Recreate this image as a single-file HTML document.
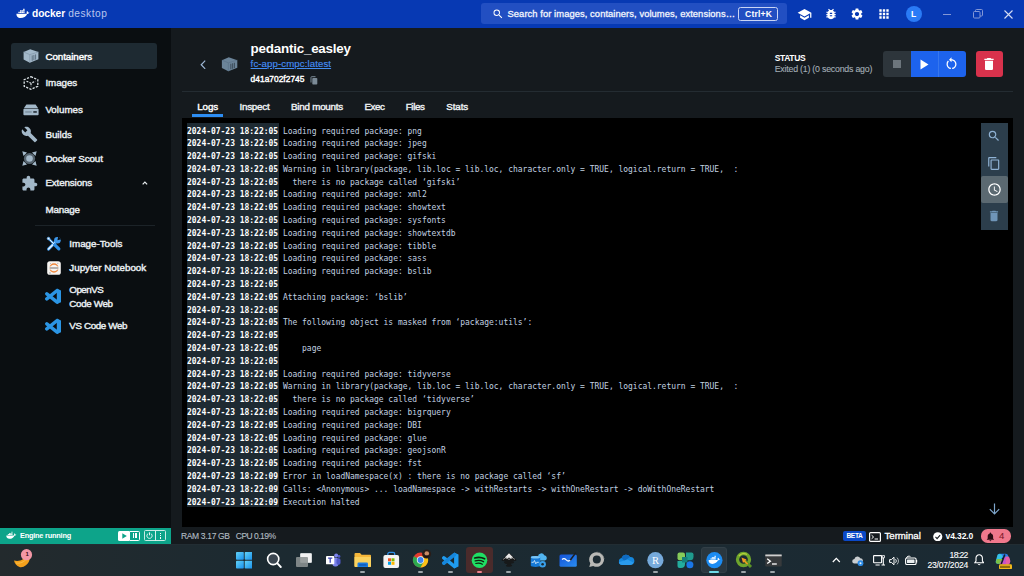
<!DOCTYPE html>
<html lang="en">
<head>
<meta charset="utf-8">
<title>Docker Desktop</title>
<style>
*{box-sizing:border-box;margin:0;padding:0}
html,body{width:1024px;height:576px;overflow:hidden;background:#151a1e;font-family:"Liberation Sans",Arial,sans-serif;color:#fff}
.abs{position:absolute}
.tx{position:absolute;white-space:nowrap}
#top{position:absolute;left:0;top:0;width:1024px;height:28px;background:#0739b3}
#side{position:absolute;left:0;top:28px;width:171px;height:500px;background:#0a0e11}
#main{position:absolute;left:171px;top:28px;width:853px;height:500px;background:#151a1e}
#search{position:absolute;left:481px;top:3px;width:306px;height:21px;border-radius:3px;background:#224fc2}
#search .k{position:absolute;left:257px;top:4px;width:40px;height:14px;border:1px solid #c9d5f5;border-radius:2.5px;font-size:8.6px;font-weight:700;line-height:12px;text-align:center;color:#fff}
#pill{position:absolute;left:11px;top:43px;width:146px;height:26px;border-radius:3px;background:#1e2a32}
.hr{position:absolute;left:182px;top:91px;width:831px;height:1px;background:#242c32}
#ul{position:absolute;left:192px;top:114px;width:31px;height:3px;background:#2d8df2}
#log{position:absolute;left:182px;top:118px;width:831px;height:409px;background:#000;overflow:hidden}
#tsbg{position:absolute;left:5px;top:5px;width:91.6px;height:384px;background:#1e2a32}
#log .in{position:absolute;left:5px;top:6.5px;font-family:"DejaVu Sans Mono","Liberation Mono",monospace;font-size:9.2px;line-height:12.8px;color:#c2d2e0;white-space:pre;transform:scaleX(0.8667);transform-origin:0 0}
.ln{height:12.8px}
.ln b{color:#fff;font-weight:700}
.btn{position:absolute;top:51px;height:26px}
#foot-l{position:absolute;left:0;top:528px;width:171px;height:16px;background:#0da48a}
#foot-r{position:absolute;left:171px;top:528px;width:853px;height:16px;background:#151a1e}
#task{position:absolute;left:0;top:544px;width:1024px;height:32px;background:linear-gradient(90deg,#232a2d 0%,#1c2a31 25%,#1b2a33 100%)}
</style>
</head>
<body>
<!-- ============ TOP BAR ============ -->
<div id="top">
  <svg class="abs" style="left:15.800px;top:8.300px" width="14.500" height="11.600" viewBox="0 0 30 24"><path fill="#fff" d="M29.2 10.1c-.7-.5-2.300-.7-3.500-.4-.2-1.200-.9-2.300-2-3.100l-.6-.4-.4.600c-.8 1.200-1 3.100-.2 4.400-.4.200-1.100.5-2.100.5H1c-.4 2 .1 4.700 1.700 6.500 1.500 1.800 3.800 2.700 6.800 2.700 6.500 0 11.300-3 13.600-8.400.9 0 2.800 0 3.800-1.900l.3-.7-.6-.4zM5 8h2.800v2.600H5zm3.300 0h2.800v2.600H8.300zm3.300 0h2.800v2.600h-2.800zm3.300 0h2.800v2.600h-2.800zM8.300 4.900h2.800v2.600H8.300zm3.300 0h2.800v2.600h-2.800zm3.300 0h2.800v2.600h-2.800zm0-3.100h2.800v2.600h-2.800z"/></svg>
  <div id="search">
    <svg class="abs" style="left:11px;top:5px" width="12" height="12" viewBox="0 0 24 24"><path fill="#fff" d="M15.500 14h-.79l-.28-.27A6.470 6.470 0 0 0 16 9.500 6.500 6.500 0 1 0 9.500 16c1.610 0 3.090-.59 4.230-1.570l.27.28v.79l5 4.990L20.490 19l-4.990-5zm-6 0C7.010 14 5 11.990 5 9.500S7.010 5 9.500 5 14 7.010 14 9.500 11.990 14 9.500 14z"/></svg>
    <div class="k"></div>
  </div>
  <!-- learning -->
  <svg class="abs" style="left:797px;top:7px" width="15" height="15" viewBox="0 0 24 24"><path fill="#fff" d="M5 13.180v4L12 21l7-3.820v-4L12 17l-7-3.820zM12 3 1 9l11 6 9-4.910V17h2V9L12 3z"/></svg>
  <!-- bug -->
  <svg class="abs" style="left:824px;top:7px" width="14" height="14" viewBox="0 0 24 24"><path fill="#fff" d="M20 8h-2.810a5.985 5.985 0 0 0-1.820-1.960L17 4.410 15.590 3l-2.170 2.170C12.960 5.060 12.490 5 12 5c-.49 0-.96.060-1.410.170L8.410 3 7 4.410l1.620 1.630C7.880 6.550 7.260 7.220 6.810 8H4v2h2.090c-.050.330-.090.660-.090 1v1H4v2h2v1c0 .340.040.670.090 1H4v2h2.810c1.040 1.790 2.970 3 5.190 3s4.150-1.210 5.190-3H20v-2h-2.090c.050-.330.090-.660.090-1v-1h2v-2h-2v-1c0-.340-.040-.670-.090-1H20V8zm-6 8h-4v-2h4v2zm0-4h-4v-2h4v2z"/></svg>
  <!-- gear -->
  <svg class="abs" style="left:850px;top:7px" width="14" height="14" viewBox="0 0 24 24"><path fill="#fff" d="M19.140 12.940c.040-.300.060-.610.060-.940 0-.320-.020-.640-.070-.940l2.030-1.580a.490.490 0 0 0 .12-.61l-1.920-3.320a.488.488 0 0 0-.59-.22l-2.390.96c-.5-.38-1.030-.7-1.620-.94l-.36-2.540a.484.484 0 0 0-.48-.41h-3.840c-.24 0-.43.170-.47.410l-.36 2.540c-.59.240-1.130.57-1.620.94l-2.390-.96c-.22-.08-.47 0-.59.220L2.740 8.870c-.12.210-.08.470.12.610l2.030 1.580c-.05.300-.09.630-.09.940s.02.640.07.940l-2.030 1.580a.49.490 0 0 0-.12.610l1.920 3.320c.12.220.37.290.59.220l2.390-.96c.5.380 1.030.7 1.620.94l.36 2.540c.05.240.24.410.48.410h3.840c.24 0 .44-.17.470-.41l.36-2.540c.59-.24 1.130-.56 1.620-.94l2.390.96c.22.08.47 0 .59-.22l1.920-3.320c.12-.22.070-.47-.12-.61l-2.010-1.580zM12 15.600c-1.980 0-3.600-1.620-3.600-3.600s1.620-3.600 3.600-3.600 3.600 1.620 3.600 3.600-1.620 3.600-3.600 3.600z"/></svg>
  <!-- grid -->
  <svg class="abs" style="left:877px;top:7px" width="14" height="14" viewBox="0 0 24 24"><path fill="#fff" d="M4 8h4V4H4v4zm6 12h4v-4h-4v4zm-6 0h4v-4H4v4zm0-6h4v-4H4v4zm6 0h4v-4h-4v4zm6-10v4h4V4h-4zm-6 4h4V4h-4v4zm6 6h4v-4h-4v4zm0 6h4v-4h-4v4z"/></svg>
  <!-- avatar -->
  <div class="abs" style="left:905.500px;top:6px;width:16px;height:16px;border-radius:8px;background:#2a7bf6;font-size:8.500px;font-weight:700;line-height:16px;text-align:center;color:#fff">L</div>
  <!-- window controls -->
  <div class="abs" style="left:943px;top:13.500px;width:8px;height:1px;background:#8397d6"></div>
  <svg class="abs" style="left:973px;top:9px" width="10" height="10" viewBox="0 0 10 10"><rect x="0.5" y="2.500" width="6.500" height="6.500" rx="1" fill="none" stroke="#8397d6" stroke-width="1"/><path d="M2.500 2.500V1.500a1 1 0 0 1 1-1H8.500a1 1 0 0 1 1 1V6a1 1 0 0 1-1 1H7" fill="none" stroke="#8397d6" stroke-width="1"/></svg>
  <svg class="abs" style="left:1004px;top:9.500px" width="9" height="9" viewBox="0 0 9 9"><path d="M0.500 0.500l8 8M8.500 0.500l-8 8" stroke="#d5dcf3" stroke-width="1.100" fill="none"/></svg>
</div>

<!-- ============ SIDEBAR ============ -->
<div id="side"></div>
<div id="pill"></div>
<!-- containers -->
<svg class="abs" style="left:23px;top:49px" width="16" height="14" viewBox="0 0 16 14"><path d="M7.200 0.300L0.600 3v7.600l6.200 3.100 8.600-3.500V3z" fill="#a3b8c9"/><path d="M0.600 3l6.200 2.600 8.600-2.600M6.800 5.600v8.100" stroke="#8397a7" stroke-width="0.700" fill="none"/><path d="M9.200 6.400v5.400M10.900 5.900v5.300M12.600 5.400v5.200" stroke="#5f7282" stroke-width="1"/></svg>
<!-- images -->
<svg class="abs" style="left:23px;top:76px" width="16" height="14" viewBox="0 0 16 14"><path d="M8 0.700L14.800 3.700v6.600L8 13.300 1.200 10.300V3.700z" fill="none" stroke="#dfe6ea" stroke-width="1.300" stroke-dasharray="2.200 1.300"/><path d="M3.500 5.200L8 7.200l4.500-2M8 7.200v3.600" fill="none" stroke="#dfe6ea" stroke-width="1.200" stroke-dasharray="2 1.200"/></svg>
<!-- volumes -->
<svg class="abs" style="left:23px;top:104px" width="16" height="12" viewBox="0 0 16 12"><path d="M3.400 0.500h9.200l2.600 3.800H0.800z" fill="#a3b8c9"/><rect x="0.400" y="4.700" width="15.200" height="6.600" rx="1" fill="#a3b8c9"/><rect x="2.200" y="7.300" width="6.500" height="1.300" fill="#788b9a"/><rect x="10.300" y="7.100" width="3.500" height="1.700" fill="#2a343c"/></svg>
<!-- builds (wrench) -->
<svg class="abs" style="left:21px;top:126px" width="17" height="17" viewBox="0 0 24 24"><path fill="#a3b8c9" d="M22.700 19l-9.100-9.100c.9-2.300.4-5-1.500-6.900-2-2-5-2.400-7.400-1.300L9 6 6 9 1.600 4.700C.4 7.100.9 10.100 2.900 12.100c1.900 1.900 4.600 2.400 6.900 1.500l9.100 9.100c.4.400 1 .4 1.400 0l2.300-2.300c.5-.4.500-1.100.1-1.400z"/></svg>
<!-- scout -->
<svg class="abs" style="left:22px;top:151px" width="15" height="15" viewBox="0 0 15 15"><path d="M0.300 0.300l4.700 1.200L1.500 5zM14.700 0.300L13.500 5 10 1.500zM0.300 14.700L1.500 10 5 13.500zM14.700 14.700L10 13.500 13.500 10z" fill="#a3b8c9"/><circle cx="7.500" cy="7.500" r="5.600" fill="#55636e"/><circle cx="7.500" cy="7.500" r="3.300" fill="#a3b8c9"/></svg>
<!-- extensions (puzzle) -->
<svg class="abs" style="left:21px;top:174.500px" width="17" height="17" viewBox="0 0 24 24"><path fill="#a3b8c9" d="M20.500 11H19V7c0-1.100-.9-2-2-2h-4V3.500C13 2.120 11.880 1 10.500 1S8 2.120 8 3.500V5H4c-1.100 0-1.990.9-1.990 2v3.800H3.500c1.490 0 2.700 1.210 2.700 2.700s-1.210 2.700-2.700 2.700H2V20c0 1.100.9 2 2 2h3.800v-1.500c0-1.490 1.210-2.700 2.700-2.700 1.490 0 2.700 1.210 2.700 2.700V22H17c1.100 0 2-.9 2-2v-4h1.500c1.380 0 2.500-1.120 2.500-2.500S21.880 11 20.500 11z"/></svg>
<!-- image-tools -->
<svg class="abs" style="left:46px;top:236px" width="15.500" height="15.500" viewBox="0 0 15.500 15.500"><path d="M2.600 13L10.500 5" stroke="#4a9fec" stroke-width="3.200" stroke-linecap="round" fill="none"/><path d="M2.600 13L9.500 6" stroke="#eef5fc" stroke-width="1.400" stroke-linecap="round" fill="none"/><circle cx="11.400" cy="4.200" r="3.300" fill="#3d97ea"/><path d="M11.400 4.200L12.300 0.300 15.300 3.200z" fill="#0a0e11"/><path d="M3 3L8.500 8.500" stroke="#4a9fec" stroke-width="2.400" stroke-linecap="round" fill="none"/><path d="M3 3L8 8" stroke="#eef5fc" stroke-width="1" stroke-linecap="round" fill="none"/><path d="M8.800 8.800L12.800 12.800" stroke="#2f8fe6" stroke-width="3.300" stroke-linecap="round" fill="none"/><circle cx="2.500" cy="2.500" r="1.300" fill="#eef5fc" stroke="#4a9fec" stroke-width="0.700"/></svg>
<!-- jupyter -->
<svg class="abs" style="left:46.500px;top:260.500px" width="14" height="14" viewBox="0 0 14 14"><rect x="0.200" y="0.200" width="13.600" height="13.600" rx="2.600" fill="#f6f4f1"/><circle cx="7" cy="7" r="4" fill="none" stroke="#f0893f" stroke-width="1.400"/><rect x="1.800" y="5.400" width="10.400" height="3.200" fill="#f6f4f1"/><rect x="2.600" y="6.400" width="8.800" height="1.200" fill="#8a8584"/><circle cx="3" cy="11.900" r="0.600" fill="#767677"/><circle cx="10.800" cy="2.200" r="0.550" fill="#989798"/><circle cx="3.400" cy="2.400" r="0.450" fill="#767677"/></svg>
<!-- openvs code -->
<svg class="abs" style="left:44.800px;top:288.200px" width="16.600" height="16.600" viewBox="0 0 100 100"><path d="M71 3L97 15V85L71 97z" fill="#2b95e4"/><path d="M73 15L11 65M11 35L73 85" stroke="#2b95e4" stroke-width="21" stroke-linecap="round" fill="none"/></svg>
<!-- vs code web -->
<svg class="abs" style="left:44.800px;top:317.800px" width="16.600" height="16.600" viewBox="0 0 100 100"><path d="M71 3L97 15V85L71 97z" fill="#2b95e4"/><path d="M73 15L11 65M11 35L73 85" stroke="#2b95e4" stroke-width="21" stroke-linecap="round" fill="none"/></svg>

<svg class="abs" style="left:142px;top:180.800px" width="5.800" height="4.200" viewBox="0 0 7 5"><path d="M0.800 4l2.700-2.700L6.200 4" stroke="#e8edf0" stroke-width="1.500" fill="none"/></svg>
<div class="abs" style="left:35px;top:225px;width:119.500px;height:1px;background:#1c2328"></div>

<!-- ============ MAIN ============ -->
<div id="main"></div>
<svg class="abs" style="left:199.500px;top:59.500px" width="6.400" height="9.500" viewBox="0 0 7 11"><path d="M5.800 0.800L1.200 5.500l4.600 4.700" stroke="#9fb8d6" stroke-width="1.400" fill="none"/></svg>
<svg class="abs" style="left:220.800px;top:57px" width="17.200" height="14.600" viewBox="0 0 16 14"><path d="M7.200 0.300L0.600 3v7.600l6.200 3.100 8.600-3.500V3z" fill="#6b8499"/><path d="M0.600 3l6.200 2.600 8.600-2.600M6.800 5.600v8.100" stroke="#5a7186" stroke-width="0.600" fill="none"/><path d="M9.200 6.400v5.400M10.900 5.900v5.300M12.600 5.400v5.200" stroke="#3e4f5d" stroke-width="1"/></svg>

<svg class="abs" style="left:310px;top:75.500px" width="8" height="9" viewBox="0 0 8 9"><rect x="2.300" y="2" width="5" height="6.500" rx="0.800" fill="#7b8a96"/><path d="M1 6.500V1.300a.6.600 0 0 1 .6-.6H5.500" stroke="#7b8a96" stroke-width="1" fill="none"/></svg>

<div class="btn" style="left:883px;width:28px;background:#2d353b;border-radius:3px 0 0 3px"></div>
<div class="abs" style="left:892.500px;top:60px;width:8px;height:8px;background:#6c757c"></div>
<div class="btn" style="left:910.500px;width:27.500px;background:#1d63ed"></div>
<svg class="abs" style="left:920px;top:58.500px" width="9" height="11" viewBox="0 0 9 11"><path d="M0.500 0.500v10l8-5z" fill="#fff"/></svg>
<div class="btn" style="left:938px;width:27.500px;background:#1d63ed;border-radius:0 3px 3px 0;border-left:1px solid #3677ee"></div>
<svg class="abs" style="left:944.200px;top:55.800px" width="15" height="15" viewBox="0 0 24 24"><path fill="#fff" d="M12 5V2L8 6l4 4V7c3.310 0 6 2.690 6 6 0 2.970-2.170 5.430-5 5.910v2.020c3.950-.49 7-3.850 7-7.930 0-4.420-3.580-8-8-8zm-6 8c0-1.650.67-3.150 1.760-4.240L6.340 7.340A8.014 8.014 0 0 0 4 13c0 4.080 3.050 7.440 7 7.930v-2.020c-2.830-.48-5-2.940-5-5.910z"/></svg>
<div class="btn" style="left:976px;width:27px;background:#d8324c;border-radius:3px"></div>
<svg class="abs" style="left:981.200px;top:55.800px" width="16" height="16" viewBox="0 0 24 24"><path fill="#fff" d="M6 19c0 1.100.9 2 2 2h8c1.100 0 2-.9 2-2V7H6v12zM19 4h-3.500l-1-1h-5l-1 1H5v2h14V4z"/></svg>

<div class="hr"></div>
<div id="ul"></div>

<div id="log"><div id="tsbg"></div><div class="in"><div class="ln"><b>2024-07-23 18:22:05</b> Loading required package: png</div><div class="ln"><b>2024-07-23 18:22:05</b> Loading required package: jpeg</div><div class="ln"><b>2024-07-23 18:22:05</b> Loading required package: gifski</div><div class="ln"><b>2024-07-23 18:22:05</b> Warning in library(package, lib.loc = lib.loc, character.only = TRUE, logical.return = TRUE,  :</div><div class="ln"><b>2024-07-23 18:22:05</b>   there is no package called ‘gifski’</div><div class="ln"><b>2024-07-23 18:22:05</b> Loading required package: xml2</div><div class="ln"><b>2024-07-23 18:22:05</b> Loading required package: showtext</div><div class="ln"><b>2024-07-23 18:22:05</b> Loading required package: sysfonts</div><div class="ln"><b>2024-07-23 18:22:05</b> Loading required package: showtextdb</div><div class="ln"><b>2024-07-23 18:22:05</b> Loading required package: tibble</div><div class="ln"><b>2024-07-23 18:22:05</b> Loading required package: sass</div><div class="ln"><b>2024-07-23 18:22:05</b> Loading required package: bslib</div><div class="ln"><b>2024-07-23 18:22:05</b> </div><div class="ln"><b>2024-07-23 18:22:05</b> Attaching package: ‘bslib’</div><div class="ln"><b>2024-07-23 18:22:05</b> </div><div class="ln"><b>2024-07-23 18:22:05</b> The following object is masked from ‘package:utils’:</div><div class="ln"><b>2024-07-23 18:22:05</b> </div><div class="ln"><b>2024-07-23 18:22:05</b>     page</div><div class="ln"><b>2024-07-23 18:22:05</b> </div><div class="ln"><b>2024-07-23 18:22:05</b> Loading required package: tidyverse</div><div class="ln"><b>2024-07-23 18:22:05</b> Warning in library(package, lib.loc = lib.loc, character.only = TRUE, logical.return = TRUE,  :</div><div class="ln"><b>2024-07-23 18:22:05</b>   there is no package called ‘tidyverse’</div><div class="ln"><b>2024-07-23 18:22:05</b> Loading required package: bigrquery</div><div class="ln"><b>2024-07-23 18:22:05</b> Loading required package: DBI</div><div class="ln"><b>2024-07-23 18:22:05</b> Loading required package: glue</div><div class="ln"><b>2024-07-23 18:22:05</b> Loading required package: geojsonR</div><div class="ln"><b>2024-07-23 18:22:05</b> Loading required package: fst</div><div class="ln"><b>2024-07-23 18:22:09</b> Error in loadNamespace(x) : there is no package called ‘sf’</div><div class="ln"><b>2024-07-23 18:22:09</b> Calls: &lt;Anonymous&gt; ... loadNamespace -&gt; withRestarts -&gt; withOneRestart -&gt; doWithOneRestart</div><div class="ln"><b>2024-07-23 18:22:09</b> Execution halted</div></div>
<div class="abs" style="left:799px;top:5px;width:26.500px;height:106.500px;background:#2c3e4c"></div>
<div class="abs" style="left:799px;top:58.300px;width:26.500px;height:26.700px;background:#5b6971;border-radius:2px"></div>
<svg class="abs" style="left:805px;top:11px" width="14" height="14" viewBox="0 0 24 24"><path fill="#8fb2d4" d="M15.500 14h-.79l-.28-.27A6.470 6.470 0 0 0 16 9.500 6.500 6.500 0 1 0 9.500 16c1.610 0 3.090-.59 4.230-1.570l.27.28v.79l5 4.990L20.490 19l-4.990-5zm-6 0C7.010 14 5 11.990 5 9.500S7.010 5 9.500 5 14 7.010 14 9.500 11.990 14 9.500 14z"/></svg>
<svg class="abs" style="left:805px;top:37.500px" width="14" height="15" viewBox="0 0 24 24"><path fill="#8fb2d4" d="M16 1H4c-1.100 0-2 .9-2 2v14h2V3h12V1zm3 4H8c-1.100 0-2 .9-2 2v14c0 1.100.9 2 2 2h11c1.100 0 2-.9 2-2V7c0-1.100-.9-2-2-2zm0 16H8V7h11v14z"/></svg>
<svg class="abs" style="left:804.500px;top:64px" width="15" height="15" viewBox="0 0 24 24"><path fill="#fff" d="M11.990 2C6.470 2 2 6.480 2 12s4.470 10 9.990 10C17.520 22 22 17.520 22 12S17.520 2 11.990 2zM12 20c-4.420 0-8-3.580-8-8s3.580-8 8-8 8 3.580 8 8-3.580 8-8 8zm.5-13H11v6l5.250 3.150.75-1.230-4.500-2.670z"/></svg>
<svg class="abs" style="left:805px;top:91px" width="14" height="14" viewBox="0 0 24 24"><path fill="#6f95b8" d="M6 19c0 1.100.9 2 2 2h8c1.100 0 2-.9 2-2V7H6v12zM19 4h-3.500l-1-1h-5l-1 1H5v2h14V4z"/></svg>
<svg class="abs" style="left:806.500px;top:385px" width="11" height="12" viewBox="0 0 11 12"><path d="M5.500 0.500v10.200M0.800 6.200l4.700 4.700 4.700-4.700" stroke="#7ea6cc" stroke-width="1.200" fill="none"/></svg>

</div>

<!-- ============ FOOTER ============ -->
<div id="foot-l"></div>
<div id="foot-r"></div>
<!-- whale in footer -->
<svg class="abs" style="left:5.500px;top:531px" width="11" height="9" viewBox="0 0 30 24"><path fill="#fff" d="M29.200 10.100c-.7-.5-2.300-.7-3.500-.4-.2-1.200-.9-2.300-2-3.100l-.6-.4-.4.600c-.8 1.200-1 3.100-.2 4.400-.4.200-1.100.5-2.100.5H1c-.4 2 .1 4.700 1.700 6.500 1.500 1.800 3.800 2.700 6.800 2.700 6.500 0 11.300-3 13.600-8.400.9 0 2.800 0 3.800-1.900l.3-.7-.6-.4zM5 8h2.800v2.600H5zm3.300 0h2.800v2.600H8.300zm3.300 0h2.800v2.600h-2.800zm3.300 0h2.800v2.600h-2.800zM8.300 4.900h2.800v2.600H8.300zm3.300 0h2.800v2.600h-2.800zm3.300 0h2.800v2.600h-2.800zm0-3.100h2.800v2.600h-2.800z"/></svg>
<!-- play/pause -->
<div class="abs" style="left:118.200px;top:530.500px;width:11px;height:10.500px;background:#fff;border-radius:1.500px 0 0 1.500px"></div>
<svg class="abs" style="left:121.500px;top:533px" width="5" height="6" viewBox="0 0 5 6"><path d="M0.300 0.200v5.600L4.800 3z" fill="#0da48a"/></svg>
<div class="abs" style="left:129.200px;top:530.500px;width:11px;height:10.500px;border:1px solid #fff;border-radius:0 1.500px 1.500px 0"></div>
<div class="abs" style="left:132.700px;top:533.300px;width:1.500px;height:5px;background:#fff"></div>
<div class="abs" style="left:135.400px;top:533.300px;width:1.500px;height:5px;background:#fff"></div>
<!-- power/kebab -->
<div class="abs" style="left:144.200px;top:530.300px;width:22px;height:11px;border:1px solid #c9ece5;border-radius:1.500px"></div>
<div class="abs" style="left:155px;top:530.500px;width:1px;height:10.500px;background:#d9f1ec"></div>
<svg class="abs" style="left:146.300px;top:532.300px" width="7" height="7" viewBox="0 0 7 7"><path d="M2.200 1.500a2.600 2.600 0 1 0 2.600 0" stroke="#fff" stroke-width="0.900" fill="none"/><path d="M3.500 0.300v3" stroke="#fff" stroke-width="0.900"/></svg>
<div class="abs" style="left:160.200px;top:533px;width:1.200px;height:1.200px;background:#fff"></div>
<div class="abs" style="left:160.200px;top:535.200px;width:1.200px;height:1.200px;background:#fff"></div>
<div class="abs" style="left:160.200px;top:537.400px;width:1.200px;height:1.200px;background:#fff"></div>
<!-- right footer -->
<div class="abs" style="left:843.300px;top:531px;width:22.500px;height:10px;background:#0b49c8;border-radius:2px"></div>
<svg class="abs" style="left:869px;top:531.500px" width="12" height="10" viewBox="0 0 12 10"><rect x="0.600" y="0.600" width="10.800" height="8.800" rx="1" fill="none" stroke="#fff" stroke-width="1.200"/><path d="M2.600 3.200l2 1.800-2 1.800M5.600 7h3.400" stroke="#fff" stroke-width="1" fill="none"/></svg>
<svg class="abs" style="left:933px;top:531.500px" width="9.500" height="9.500" viewBox="0 0 10 10"><circle cx="5" cy="5" r="4.800" fill="#fff"/><path d="M2.600 5.200l1.700 1.700 3.200-3.500" stroke="#151a1e" stroke-width="1.200" fill="none"/></svg>
<div class="abs" style="left:981.300px;top:529.400px;width:29.600px;height:13.200px;border-radius:6.600px;background:#f0788c"></div>
<svg class="abs" style="left:985.200px;top:530.600px" width="10.800" height="11.400" viewBox="0 0 24 24"><path fill="#2b0d13" d="M12 22c1.100 0 2-.9 2-2h-4c0 1.100.89 2 2 2zm6-6v-5c0-3.070-1.640-5.640-4.500-6.320V4c0-.83-.67-1.500-1.500-1.500s-1.500.67-1.500 1.500v.68C7.630 5.360 6 7.920 6 11v5l-2 2v1h16v-1l-2-2z"/></svg>


<!-- ============ TASKBAR ============ -->
<div id="task"></div>
<div class="abs" style="left:0;top:544px;width:1024px;height:1px;background:#222d33"></div>
<!-- widget: crescent + badge -->
<svg class="abs" style="left:12px;top:547.800px" width="22" height="23" viewBox="0 0 22 23"><path d="M2 12.500c5 1.500 11-.5 13.500-7.500 1.800 1 3 4 1.800 7.500-1.500 4.500-6 7.500-9.800 6.500-2.800-.7-4.800-3.500-5.500-6.500z" fill="#f5a11c"/><path d="M4 15c3.500.8 8.500-.8 11-5" stroke="#f9c04a" stroke-width="1" fill="none"/><circle cx="14.500" cy="6.700" r="5.600" fill="#f397a6"/></svg>
<!-- windows -->
<svg class="abs" style="left:235.700px;top:552px" width="16.500" height="16.500" viewBox="0 0 16.500 16.500"><defs><linearGradient id="wg" x1="0" y1="0" x2="1" y2="1"><stop offset="0" stop-color="#63d2f5"/><stop offset="1" stop-color="#1890ee"/></linearGradient></defs><rect x="0" y="0" width="7.800" height="7.800" rx="0.800" fill="url(#wg)"/><rect x="8.700" y="0" width="7.800" height="7.800" rx="0.800" fill="url(#wg)"/><rect x="0" y="8.700" width="7.800" height="7.800" rx="0.800" fill="url(#wg)"/><rect x="8.700" y="8.700" width="7.800" height="7.800" rx="0.800" fill="url(#wg)"/></svg>
<!-- search -->
<svg class="abs" style="left:265px;top:551px" width="18" height="18" viewBox="0 0 18 18"><circle cx="8.200" cy="8" r="5.600" fill="#3b4650" stroke="#fff" stroke-width="1.600"/><path d="M12.400 12.300l3.400 3.700" stroke="#fff" stroke-width="1.900" stroke-linecap="round"/></svg>
<!-- task view -->
<div class="abs" style="left:299.500px;top:552.500px;width:12px;height:10.300px;background:#f2f2f2;border-radius:1px;border:1px solid #cfd4d6"></div>
<div class="abs" style="left:295.500px;top:556.500px;width:12px;height:10.300px;background:rgba(140,146,146,0.880);border-radius:1px"></div>
<!-- teams -->
<svg class="abs" style="left:325px;top:552px" width="16" height="16" viewBox="0 0 16 16"><circle cx="11.200" cy="3.400" r="2" fill="#7b83eb"/><circle cx="14" cy="4.400" r="1.400" fill="#5059c9"/><rect x="7.500" y="5.800" width="6" height="8.600" rx="2.600" fill="#7b83eb"/><rect x="11.500" y="6.200" width="4" height="6.600" rx="1.800" fill="#5059c9"/><rect x="1" y="4" width="8.300" height="8.300" rx="0.900" fill="#fff"/><path d="M3.100 6.100h4.200M5.200 6.100v4.700" stroke="#3b44b4" stroke-width="1.300"/></svg>
<!-- explorer -->
<svg class="abs" style="left:353.500px;top:552px" width="17.500" height="16" viewBox="0 0 17.500 16"><path d="M0.500 2a1 1 0 0 1 1-1h4.500l1.600 1.800H16a1 1 0 0 1 1 1V14a1 1 0 0 1-1 1H1.500a1 1 0 0 1-1-1z" fill="#f5b73a"/><path d="M0.500 5h16.500v9a1 1 0 0 1-1 1H1.500a1 1 0 0 1-1-1z" fill="#fad25f"/><path d="M3.500 15v-3.200a1.200 1.200 0 0 1 1.200-1.200h8.100a1.200 1.200 0 0 1 1.200 1.200V15z" fill="#1b7ae0"/><rect x="5" y="12.300" width="7.500" height="1.300" fill="#0f56b3"/></svg>
<div class="abs" style="left:359.600px;top:571px;width:5px;height:2px;border-radius:1px;background:#9ba4a9"></div>
<!-- store -->
<svg class="abs" style="left:383px;top:551px" width="16.500" height="17.500" viewBox="0 0 16.500 17.500"><path d="M4.800 4.500V3a1.600 1.600 0 0 1 1.600-1.600h3.700A1.600 1.600 0 0 1 11.700 3v1.500" fill="none" stroke="#2f8fe6" stroke-width="1.300"/><rect x="0.400" y="3.900" width="15.700" height="13.200" rx="2" fill="#f4f4f4"/><rect x="5" y="7.300" width="3" height="3" fill="#f25022"/><rect x="8.500" y="7.300" width="3" height="3" fill="#7fba00"/><rect x="5" y="10.800" width="3" height="3" fill="#00a4ef"/><rect x="8.500" y="10.800" width="3" height="3" fill="#ffb900"/></svg>
<!-- chrome -->
<svg class="abs" style="left:412px;top:548px" width="21" height="21" viewBox="0 0 21 21"><circle cx="8.500" cy="12" r="7.600" fill="#e33b2e"/><path d="M8.500 12L1.900 8.200A7.600 7.600 0 0 0 8.500 19.600L12.300 13z" fill="#2da94f"/><path d="M8.500 12l3.800 1L8.500 19.600A7.600 7.600 0 0 0 15.100 8.200H8.500z" fill="#fbc116"/><circle cx="8.500" cy="12" r="3.700" fill="#f1f1f1"/><circle cx="8.500" cy="12" r="2.900" fill="#3c82f0"/><circle cx="14.600" cy="6" r="4.500" fill="#2a1d18"/><circle cx="14.800" cy="5.500" r="2.300" fill="#c98a64"/><path d="M12.200 7.500a2.600 2.600 0 0 0 5 0z" fill="#171210"/></svg>
<div class="abs" style="left:418px;top:571px;width:5px;height:2px;border-radius:1px;background:#9ba4a9"></div>
<!-- vscode -->
<svg class="abs" style="left:441.500px;top:551.500px" width="17" height="17" viewBox="0 0 100 100"><path d="M71 3L97 15V85L71 97z" fill="#1f9cf0"/><path d="M73 15L11 65M11 35L73 85" stroke="#1f9cf0" stroke-width="21" stroke-linecap="round" fill="none"/><path d="M73 15L11 65" stroke="#0d72c8" stroke-width="21" stroke-linecap="round" fill="none" opacity="0.500"/></svg>
<div class="abs" style="left:447.500px;top:571px;width:5px;height:2px;border-radius:1px;background:#9ba4a9"></div>
<!-- spotify -->
<div class="abs" style="left:466px;top:546.700px;width:26.800px;height:26.300px;border-radius:3px;background:#4a2b2b"></div>
<svg class="abs" style="left:471px;top:551.500px" width="17" height="17" viewBox="0 0 17 17"><circle cx="8.500" cy="8.200" r="7.800" fill="#1fdf64"/><path d="M3.700 6c3.400-1.100 7-.8 9.900.8" stroke="#10240f" stroke-width="1.700" fill="none" stroke-linecap="round"/><path d="M4.200 8.900c2.800-.8 5.800-.6 8.300.8" stroke="#10240f" stroke-width="1.400" fill="none" stroke-linecap="round"/><path d="M4.800 11.500c2.300-.6 4.600-.4 6.600.7" stroke="#10240f" stroke-width="1.200" fill="none" stroke-linecap="round"/></svg>
<div class="abs" style="left:477px;top:571px;width:5.300px;height:2px;border-radius:1px;background:#f0818c"></div>
<!-- inkscape -->
<svg class="abs" style="left:501px;top:551.500px" width="16" height="16.500" viewBox="0 0 16 16.500"><path d="M8 0.500L15 7.600c.6.700.3 1.400-.6 1.400H1.600C.7 9 .4 8.300 1 7.600z" fill="#17191a"/><path d="M8 1.200L12.200 5.400 10 6.800 8 5.400 6 6.800 3.800 5.400z" fill="#e8e8e8"/><path d="M3 9.500c2-.6 8-.6 10 0 .5 1.200-1.200 2-3 2.200-.3.800 1.500 1 1.200 2-.4 1.300-5.800 1.600-6.300.4-.3-.9 1.400-1 1.200-2-1.800-.3-3.500-1.200-3.100-2.600z" fill="#17191a"/><path d="M2 7.500l3-2 3 2 3-2 3 2" stroke="#9a9a9a" stroke-width="0.800" fill="none"/></svg>
<div class="abs" style="left:506px;top:571px;width:5px;height:2px;border-radius:1px;background:#9ba4a9"></div>
<!-- azure data studio like -->
<svg class="abs" style="left:529.500px;top:551px" width="17.500" height="17.500" viewBox="0 0 17.500 17.500"><path d="M8 5.600a3.300 3.300 0 0 1 6.300-1.300A2.700 2.700 0 0 1 14.800 9.600H8.600A2 2 0 0 1 8 5.600z" fill="#52b5f0"/><path d="M0.800 6.200c0-1.500 9.400-1.500 9.400 0v8.600c0 1.500-9.400 1.500-9.400 0z" fill="#1679d6"/><ellipse cx="5.500" cy="6.200" rx="4.700" ry="1.300" fill="#79c6f7"/><path d="M1.500 11.300h2l1-1.800 1.300 3.300 1-1.500h2" stroke="#e5f3ff" stroke-width="0.800" fill="none"/><circle cx="12.600" cy="13.300" r="3.300" fill="#3aa0ea"/><circle cx="12.600" cy="13.300" r="1.300" fill="#1c2a32"/></svg>
<!-- whiteboard -->
<svg class="abs" style="left:558.500px;top:551.500px" width="19" height="16" viewBox="0 0 19 16"><defs><linearGradient id="wb" x1="0" y1="0" x2="1" y2="1"><stop offset="0" stop-color="#1452d8"/><stop offset="1" stop-color="#2a8df0"/></linearGradient></defs><rect x="0.500" y="2.500" width="17.300" height="12.300" rx="1.500" fill="url(#wb)"/><path d="M3 7.500c1.500-1.200 3-.8 4.200.4s2.800 1.500 4.300.2" stroke="#fff" stroke-width="1.200" fill="none"/><path d="M11.200 8.200L16.800 0.800" stroke="#1d2024" stroke-width="1.500"/></svg>
<!-- chat -->
<svg class="abs" style="left:588px;top:551px" width="17" height="17" viewBox="0 0 17 17"><path d="M8.700 1.200a7.300 7.300 0 1 1-3.500 13.700L1.300 16l1-3.700A7.300 7.300 0 0 1 8.700 1.200z" fill="#b9b9b6"/><circle cx="8.800" cy="8.400" r="4" fill="#1c2a32"/><path d="M8.700 1.200a7.300 7.300 0 0 1 7.300 7.300" stroke="#8d8d8a" stroke-width="1" fill="none" stroke-dasharray="1 1"/></svg>
<!-- onedrive -->
<svg class="abs" style="left:617.500px;top:554px" width="17" height="12" viewBox="0 0 17 12"><path d="M4.200 11A3.500 3.500 0 0 1 3.600 4.100 4.600 4.600 0 0 1 12 3a3.900 3.900 0 0 1 1.600 7.600c-.4.300-.9.400-1.400.4z" fill="#1587dd"/><path d="M3.600 4.100A4.600 4.600 0 0 1 12 3L6.500 7z" fill="#0f6ac0"/><path d="M0.800 8.300A3.500 3.500 0 0 0 4.200 11h8a3.900 3.900 0 0 0 3.600-2.300L9.500 5.500z" fill="#2a9bec"/></svg>
<!-- rstudio -->
<svg class="abs" style="left:647px;top:551.500px" width="17" height="17" viewBox="0 0 17 17"><circle cx="8.400" cy="8.200" r="8.100" fill="#76aadb"/><text x="8.500" y="12" font-family="Liberation Serif,serif" font-size="10.500" fill="#fff" text-anchor="middle">R</text></svg>
<div class="abs" style="left:652.500px;top:571px;width:5px;height:2px;border-radius:1px;background:#9ba4a9"></div>
<!-- planner -->
<svg class="abs" style="left:676.500px;top:551.500px" width="17" height="17" viewBox="0 0 17 17"><rect x="0.500" y="0.500" width="7.500" height="7.800" rx="2" fill="#86cc5a"/><path d="M9 0.500h5.500a2 2 0 0 1 2 2v2.300a3.500 3.500 0 0 1-3.500 3.500H9z" fill="#1f9b8e"/><path d="M0.500 9h7.500v3a4 4 0 0 1-4 4H2.500a2 2 0 0 1-2-2z" fill="#23ac9d"/><rect x="5" y="5" width="5.500" height="5.500" fill="#15807a"/><circle cx="12.900" cy="12.700" r="3.500" fill="#1a76e6"/></svg>
<!-- docker -->
<div class="abs" style="left:701px;top:546.700px;width:26.300px;height:26.300px;border-radius:3px;background:#2a373f;border:1px solid #323f47"></div>
<svg class="abs" style="left:705.500px;top:551.500px" width="17" height="17" viewBox="0 0 17 17"><circle cx="8.400" cy="8.200" r="8.100" fill="#1c8cf2"/><g transform="translate(2.300,3.100) scale(0.420)"><path fill="#fff" d="M29.200 10.100c-.7-.5-2.300-.7-3.500-.4-.2-1.200-.9-2.300-2-3.100l-.6-.4-.4.600c-.8 1.200-1 3.100-.2 4.400-.4.200-1.100.5-2.100.5H1c-.4 2 .1 4.700 1.700 6.500 1.500 1.800 3.800 2.700 6.800 2.700 6.500 0 11.300-3 13.600-8.400.9 0 2.800 0 3.800-1.900l.3-.7-.6-.4zM5 8h12.700v2.600H5zm3.300-3.100h9.400v2.600H8.300zm6.600-3.100h2.800v2.600h-2.800z"/></g></svg>
<div class="abs" style="left:708.900px;top:570.900px;width:10.400px;height:2.100px;border-radius:1px;background:#6fdbe9"></div>
<!-- qgis -->
<svg class="abs" style="left:734.500px;top:550.500px" width="18" height="18" viewBox="0 0 18 18"><circle cx="8.500" cy="8.500" r="6" fill="none" stroke="#6ea52c" stroke-width="3.300"/><path d="M4 5a6 6 0 0 1 8-1.500" stroke="#b5cf3b" stroke-width="1.300" fill="none"/><path d="M9.500 9.500L16 16" stroke="#5c9427" stroke-width="3"/><path d="M6.500 6.500l5 2-1.300 1.200 3 3-1 1-3-3L8 12z" fill="#f39a1f"/></svg>
<div class="abs" style="left:741px;top:571px;width:5px;height:2px;border-radius:1px;background:#9ba4a9"></div>
<!-- terminal -->
<svg class="abs" style="left:764.500px;top:553.500px" width="17" height="13" viewBox="0 0 17 13"><rect x="0.300" y="0.500" width="16.400" height="12" rx="0.800" fill="#373a3c"/><rect x="0.300" y="0.500" width="16.400" height="1.800" fill="#cfcfcf"/><path d="M2.200 4.800l3.200 2.400-3.200 2.400" stroke="#fff" stroke-width="1.300" fill="none"/><path d="M7 10h4.800" stroke="#fff" stroke-width="1.300"/></svg>
<div class="abs" style="left:770px;top:571px;width:5px;height:2px;border-radius:1px;background:#9ba4a9"></div>
<!-- tray chevron -->
<svg class="abs" style="left:832px;top:557px" width="9" height="6" viewBox="0 0 9 6"><path d="M0.800 5l3.500-3.700L7.800 5" stroke="#fff" stroke-width="1.200" fill="none"/></svg>
<!-- tray cloud -->
<svg class="abs" style="left:851.500px;top:555.500px" width="12" height="10.500" viewBox="0 0 12 10.500"><path d="M2.600 7.500A2.300 2.300 0 0 1 2.400 2.900 3.200 3.200 0 0 1 8.300 2.200 2.700 2.700 0 0 1 9 7.500z" fill="#c9cdd0"/><circle cx="8.500" cy="7.200" r="2.900" fill="#2b8be6"/><circle cx="8.500" cy="7.200" r="1" fill="#e9f3fd"/></svg>
<!-- tray monitor -->
<svg class="abs" style="left:872.500px;top:554.500px" width="12.500" height="11" viewBox="0 0 12.500 11"><rect x="0.600" y="0.600" width="8" height="7.200" rx="0.500" fill="none" stroke="#fff" stroke-width="1.100"/><path d="M2.500 10h4.200M10.300 2.500v7.500M8.500 10h3.500" stroke="#fff" stroke-width="1.100"/><rect x="9.200" y="0.300" width="2.200" height="2.800" rx="0.400" fill="none" stroke="#fff" stroke-width="0.900"/></svg>
<!-- tray sound -->
<svg class="abs" style="left:889px;top:555.500px" width="11" height="10" viewBox="0 0 11 10"><path d="M0.600 3.600h1.800L5 1.200v7.600L2.400 6.400H0.600z" fill="none" stroke="#fff" stroke-width="1"/><path d="M6.500 3.200a2.500 2.500 0 0 1 0 3.600" stroke="#fff" stroke-width="0.900" fill="none"/><path d="M8 1.600a4.700 4.700 0 0 1 0 6.800" stroke="#c4c9cc" stroke-width="0.900" fill="none"/></svg>
<!-- tray battery -->
<svg class="abs" style="left:904.500px;top:554.500px" width="13" height="10.500" viewBox="0 0 13 10.500"><rect x="0.600" y="3" width="10.500" height="6.500" rx="1.300" fill="none" stroke="#fff" stroke-width="1.100"/><path d="M11.600 5v2.500" stroke="#fff" stroke-width="1.200"/><rect x="2" y="4.500" width="7.500" height="3.600" rx="0.500" fill="#e9ecee"/><path d="M1.500 3.200c0-1.800 2.500-2.800 4-1.500" stroke="#fff" stroke-width="1" fill="none"/></svg>
<!-- bell -->
<svg class="abs" style="left:973.500px;top:554px" width="10.500" height="11.500" viewBox="0 0 10.500 11.500"><path d="M5.200 0.800a3.200 3.200 0 0 1 3.200 3.200v3l1.200 1.700H0.800L2 7V4A3.200 3.200 0 0 1 5.200 0.800z" fill="none" stroke="#fff" stroke-width="1.100"/><path d="M3.900 9.800a1.400 1.400 0 0 0 2.600 0" stroke="#fff" stroke-width="1" fill="none"/></svg>
<!-- copilot -->
<svg class="abs" style="left:994.500px;top:552.500px" width="17.500" height="16.500" viewBox="0 0 17.500 16.500"><path d="M4.500 0.800h6.200c1.200 0 2 .7 2.300 1.800l.7 2.400H7.200L6 2.600C5.700 1.600 5.200 1 4.500.8z" fill="#2a7de8"/><path d="M4.500 0.800C3.300.8 2.600 1.600 2.300 2.600L0.800 8c-.4 1.500.4 2.700 1.800 2.700h2.600L7.500 3.200C7.200 1.900 6 .8 4.500.8z" fill="#35c1e8"/><path d="M1 8.500c-.3 1.300.5 2.200 1.700 2.200h5L9 6H1.800z" fill="#7ac143"/><path d="M12.800 11.500H7c-1.200 0-2-.7-2.300-1.800L9.600 4h4.500l1 3.300c.5 1.700-.5 4.200-2.300 4.200z" fill="#c851c9"/><path d="M10.800 3.500l2.800 0 1.400 3.500c.6 1.800-.4 4.500-2.200 4.500h-2z" fill="#e55fa3"/><path d="M9.800 1.500L6.200 11" stroke="#14202a" stroke-width="1.600"/><rect x="4" y="11.200" width="13" height="5" rx="1.300" fill="#f2b81b"/><path d="M6 12.700v2.200M8 12.700v2.200M10 12.700v2.200M12 12.700v2.200M14 12.700v2.200" stroke="#3b2c05" stroke-width="1.100"/></svg>

<div class="tx" style="left:32.00px;top:6.89px;font-size:10.2px;line-height:13.26px;font-weight:700;color:#fff;letter-spacing:-0.044px;">docker</div>
<div class="tx" style="left:68.20px;top:6.89px;font-size:10.2px;line-height:13.26px;font-weight:400;color:#b9c6ee;letter-spacing:0.502px;">desktop</div>
<div class="tx" style="left:507.50px;top:8.38px;font-size:9.4px;line-height:12.22px;font-weight:400;color:#f2f5fd;-webkit-text-stroke:0.3px #f2f5fd;letter-spacing:0.069px;">Search for images, containers, volumes, extensions…</div>
<div class="tx" style="left:745.00px;top:8.98px;font-size:8.6px;line-height:11.18px;font-weight:700;color:#fff;letter-spacing:0.194px;">Ctrl+K</div>
<div class="tx" style="left:45.40px;top:51.18px;font-size:9.8px;line-height:12.74px;font-weight:400;color:#fff;-webkit-text-stroke:0.42px #fff;letter-spacing:-0.066px;">Containers</div>
<div class="tx" style="left:45.40px;top:77.08px;font-size:9.8px;line-height:12.74px;font-weight:400;color:#e9eef1;-webkit-text-stroke:0.42px #e9eef1;letter-spacing:-0.068px;">Images</div>
<div class="tx" style="left:45.40px;top:103.58px;font-size:9.8px;line-height:12.74px;font-weight:400;color:#e9eef1;-webkit-text-stroke:0.42px #e9eef1;letter-spacing:-0.013px;">Volumes</div>
<div class="tx" style="left:45.40px;top:129.48px;font-size:9.8px;line-height:12.74px;font-weight:400;color:#e9eef1;-webkit-text-stroke:0.42px #e9eef1;letter-spacing:-0.017px;">Builds</div>
<div class="tx" style="left:45.40px;top:153.48px;font-size:9.8px;line-height:12.74px;font-weight:400;color:#e9eef1;-webkit-text-stroke:0.42px #e9eef1;letter-spacing:-0.119px;">Docker Scout</div>
<div class="tx" style="left:45.40px;top:177.48px;font-size:9.8px;line-height:12.74px;font-weight:400;color:#e9eef1;-webkit-text-stroke:0.42px #e9eef1;letter-spacing:-0.126px;">Extensions</div>
<div class="tx" style="left:45.40px;top:203.58px;font-size:9.8px;line-height:12.74px;font-weight:400;color:#e9eef1;-webkit-text-stroke:0.42px #e9eef1;letter-spacing:-0.161px;">Manage</div>
<div class="tx" style="left:69.30px;top:237.58px;font-size:9.8px;line-height:12.74px;font-weight:400;color:#e9eef1;-webkit-text-stroke:0.42px #e9eef1;letter-spacing:-0.017px;">Image-Tools</div>
<div class="tx" style="left:69.30px;top:261.58px;font-size:9.8px;line-height:12.74px;font-weight:400;color:#e9eef1;-webkit-text-stroke:0.42px #e9eef1;letter-spacing:0.007px;">Jupyter Notebook</div>
<div class="tx" style="left:69.30px;top:284.08px;font-size:9.8px;line-height:12.74px;font-weight:400;color:#e9eef1;-webkit-text-stroke:0.42px #e9eef1;letter-spacing:-0.509px;">OpenVS</div>
<div class="tx" style="left:69.30px;top:298.38px;font-size:9.8px;line-height:12.74px;font-weight:400;color:#e9eef1;-webkit-text-stroke:0.42px #e9eef1;letter-spacing:-0.346px;">Code Web</div>
<div class="tx" style="left:69.30px;top:320.08px;font-size:9.8px;line-height:12.74px;font-weight:400;color:#e9eef1;-webkit-text-stroke:0.42px #e9eef1;letter-spacing:-0.371px;">VS Code Web</div>
<div class="tx" style="left:250.60px;top:39.80px;font-size:13.4px;line-height:17.42px;font-weight:700;color:#fff;letter-spacing:-0.219px;">pedantic_easley</div>
<div class="tx" style="left:250.60px;top:58.08px;font-size:9.6px;line-height:12.48px;font-weight:400;color:#448df3;text-decoration:underline;-webkit-text-stroke:0.15px #448df3;letter-spacing:0.118px;">fc-app-cmpc:latest</div>
<div class="tx" style="left:250.60px;top:73.58px;font-size:8.4px;line-height:10.92px;font-weight:400;color:#fff;-webkit-text-stroke:0.4px #fff;letter-spacing:0.022px;">d41a702f2745</div>
<div class="tx" style="left:774.70px;top:52.68px;font-size:8.5px;line-height:11.05px;font-weight:700;color:#fff;letter-spacing:-0.370px;">STATUS</div>
<div class="tx" style="left:774.70px;top:64.48px;font-size:8.8px;line-height:11.44px;font-weight:400;color:#a3aeb6;-webkit-text-stroke:0.1px #a3aeb6;letter-spacing:-0.219px;">Exited (1) (0 seconds ago)</div>
<div class="tx" style="left:197.20px;top:101.48px;font-size:9.8px;line-height:12.74px;font-weight:400;color:#fff;-webkit-text-stroke:0.4px #fff;letter-spacing:-0.083px;">Logs</div>
<div class="tx" style="left:239.40px;top:101.48px;font-size:9.8px;line-height:12.74px;font-weight:400;color:#eef1f3;-webkit-text-stroke:0.4px #eef1f3;letter-spacing:-0.199px;">Inspect</div>
<div class="tx" style="left:291.00px;top:101.48px;font-size:9.8px;line-height:12.74px;font-weight:400;color:#eef1f3;-webkit-text-stroke:0.4px #eef1f3;letter-spacing:-0.227px;">Bind mounts</div>
<div class="tx" style="left:364.40px;top:101.48px;font-size:9.8px;line-height:12.74px;font-weight:400;color:#eef1f3;-webkit-text-stroke:0.4px #eef1f3;letter-spacing:-0.460px;">Exec</div>
<div class="tx" style="left:405.70px;top:101.48px;font-size:9.8px;line-height:12.74px;font-weight:400;color:#eef1f3;-webkit-text-stroke:0.4px #eef1f3;letter-spacing:-0.347px;">Files</div>
<div class="tx" style="left:446.30px;top:101.48px;font-size:9.8px;line-height:12.74px;font-weight:400;color:#eef1f3;-webkit-text-stroke:0.4px #eef1f3;letter-spacing:-0.107px;">Stats</div>
<div class="tx" style="left:20.00px;top:531.18px;font-size:7.4px;line-height:9.62px;font-weight:700;color:#fff;letter-spacing:-0.231px;">Engine running</div>
<div class="tx" style="left:181.00px;top:531.48px;font-size:8.5px;line-height:11.05px;font-weight:400;color:#b2bcc3;-webkit-text-stroke:0.12px #b2bcc3;letter-spacing:-0.344px;">RAM 3.17 GB</div>
<div class="tx" style="left:235.80px;top:531.48px;font-size:8.5px;line-height:11.05px;font-weight:400;color:#b2bcc3;-webkit-text-stroke:0.12px #b2bcc3;letter-spacing:-0.528px;">CPU 0.19%</div>
<div class="tx" style="left:846.50px;top:532.17px;font-size:6.6px;line-height:8.58px;font-weight:700;color:#fff;letter-spacing:-0.390px;">BETA</div>
<div class="tx" style="left:884.50px;top:529.88px;font-size:9.7px;line-height:12.61px;font-weight:400;color:#fff;-webkit-text-stroke:0.3px #fff;letter-spacing:-0.044px;">Terminal</div>
<div class="tx" style="left:945.50px;top:530.68px;font-size:8.5px;line-height:11.05px;font-weight:700;color:#fff;letter-spacing:-0.096px;">v4.32.0</div>
<div class="tx" style="left:999.00px;top:530.08px;font-size:9.6px;line-height:12.48px;font-weight:400;color:#7a1626;letter-spacing:0.000px;">4</div>
<div class="tx" style="left:949.60px;top:550.38px;font-size:8.6px;line-height:11.18px;font-weight:400;color:#fff;-webkit-text-stroke:0.1px #fff;letter-spacing:-0.704px;">18:22</div>
<div class="tx" style="left:927.40px;top:560.38px;font-size:8.6px;line-height:11.18px;font-weight:400;color:#fff;-webkit-text-stroke:0.1px #fff;letter-spacing:-0.235px;">23/07/2024</div>
<div class="tx" style="left:25.60px;top:551.47px;font-size:6px;line-height:7.8px;font-weight:700;color:#3a1016;letter-spacing:0.000px;">1</div>
</body>
</html>
